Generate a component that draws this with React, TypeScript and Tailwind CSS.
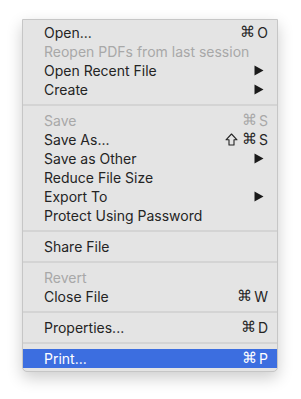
import React from "react";

type Item =
  | { type: "sep" }
  | { type: "item"; label: string; disabled?: boolean; shift?: boolean; key?: string; submenu?: boolean; active?: boolean };

const items: Item[] = [
  { type: "item", label: "Open...", key: "O" },
  { type: "item", label: "Reopen PDFs from last session", disabled: true },
  { type: "item", label: "Open Recent File", submenu: true },
  { type: "item", label: "Create", submenu: true },
  { type: "sep" },
  { type: "item", label: "Save", key: "S", disabled: true },
  { type: "item", label: "Save As...", shift: true, key: "S" },
  { type: "item", label: "Save as Other", submenu: true },
  { type: "item", label: "Reduce File Size" },
  { type: "item", label: "Export To", submenu: true },
  { type: "item", label: "Protect Using Password" },
  { type: "sep" },
  { type: "item", label: "Share File" },
  { type: "sep" },
  { type: "item", label: "Revert", disabled: true },
  { type: "item", label: "Close File", key: "W" },
  { type: "sep" },
  { type: "item", label: "Properties...", key: "D" },
  { type: "sep" },
  { type: "item", label: "Print...", key: "P", active: true },
];

function Arrow() {
  return (
    <svg width="10" height="11" viewBox="0 0 10 11" className="mr-[4px]">
      <path d="M0.5 0.5 L9.5 5.5 L0.5 10.5 Z" fill="#1a1a1a" />
    </svg>
  );
}

function Shift() {
  return (
    <svg width="13" height="13" viewBox="0 0 13 13" className="mr-[2px]">
      <path d="M6.5 1 L12 6.8 L9 6.8 L9 12 L4 12 L4 6.8 L1 6.8 Z" fill="none" stroke="currentColor" strokeWidth="1.1" strokeLinejoin="round" />
    </svg>
  );
}

export default function App() {
  return (
    <div className="w-[301px] h-[399px] bg-white pt-[19px] pl-[22px]" style={{ fontFamily: "Inter, 'Liberation Sans', sans-serif" }}>
      <div className="w-[256px] bg-[#e4e4e4] border border-[#c6c6c6] rounded-b-[5px] pt-[3px] pb-[3px] shadow-[0_6px_16px_rgba(0,0,0,0.2)]">
        {items.map((it, i) =>
          it.type === "sep" ? (
            <div key={i} className="h-[12px] flex items-center">
              <div className="w-full h-[2px] bg-[#d4d4d4]" />
            </div>
          ) : (
            <div
              key={i}
              className={
                "h-[19px] flex items-center justify-between pl-[21px] pr-[9px] text-[14px] leading-none " +
                (it.active ? "bg-[#3c6ee0] text-white" : it.disabled ? "text-[#a8a8a8]" : "text-[#242424]")
              }
            >
              <span>{it.label}</span>
              {it.key ? (
                <span className="flex items-center gap-[2px]">
                  {it.shift ? <Shift /> : null}
                  <span className="text-[15px] font-extralight" style={{ fontFamily: "'DejaVu Sans', sans-serif" }}>
                    ⌘
                  </span>
                  <span className="text-[14px]">{it.key}</span>
                </span>
              ) : it.submenu ? (
                <Arrow />
              ) : null}
            </div>
          )
        )}
      </div>
    </div>
  );
}
